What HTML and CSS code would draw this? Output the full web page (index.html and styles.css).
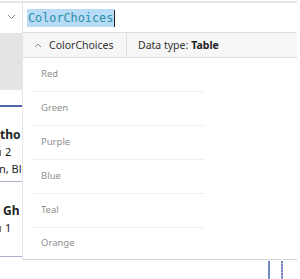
FILE: index.html
```html
<!DOCTYPE html>
<html>
<head>
<meta charset="utf-8">
<link rel="stylesheet" href="styles.css">
</head>
<body>
<div class="page">
  <div class="topline"></div>
  <div class="formula">
    <div class="chevcell">
      <svg width="9" height="6" viewBox="0 0 9 6"><path d="M1 1 L4.5 4.5 L8 1" fill="none" stroke="#8a8a8a" stroke-width="1"/></svg>
    </div>
    <div class="inputcell">
      <span class="sel">ColorChoices</span><span class="caret"></span>
    </div>
  </div>
  <div class="main">
    <div class="left">
      <div class="greybox"></div>
      <div class="rule rule-blue"></div>
      <div class="l l-bold l1">tho</div>
      <div class="l l2"><span class="frag"></span>2</div>
      <div class="l l3">n, Bl</div>
      <div class="rule rule-grey r2"></div>
      <div class="l l-bold l4">Gh</div>
      <div class="l l5"><span class="frag"></span>1</div>
      <div class="rule rule-grey r3"></div>
    </div>
    <div class="right">
      <div class="dropdown">
        <div class="head">
          <div class="head-name">
            <svg width="8" height="5" viewBox="0 0 8 5"><path d="M1 4 L4 1 L7 4" fill="none" stroke="#8a8a8a" stroke-width="1"/></svg>
            <span>ColorChoices</span>
          </div>
          <div class="head-type">Data type: <b>Table</b></div>
        </div>
        <ul class="items">
          <li>Red</li>
          <li>Green</li>
          <li>Purple</li>
          <li>Blue</li>
          <li>Teal</li>
          <li>Orange</li>
        </ul>
      </div>
      <div class="below">
        <div class="vline"></div>
        <div class="vline vline-dash"></div>
      </div>
    </div>
  </div>
</div>
</body>
</html>
```

FILE: styles.css
```css
* { box-sizing: border-box; }
html, body { margin: 0; padding: 0; background: #fff; }
.page {
  width: 300px;
  height: 279px;
  overflow: hidden;
  font-family: "Noto Sans", "Open Sans", sans-serif;
  color: #222;
}
.topline {
  margin-top: 1px;
  width: 297px;
  height: 2px;
  background: #e6e6e6;
}
.formula {
  display: flex;
  height: 29px;
}
.chevcell {
  width: 23px;
  border-right: 1px solid #e3e3e3;
  display: flex;
  align-items: center;
  justify-content: center;
  padding-bottom: 2px;
}
.inputcell {
  flex: 1;
  display: flex;
  align-items: center;
  padding-left: 4px;
  padding-top: 1px;
}
.sel {
  font-family: "DejaVu Sans Mono", monospace;
  font-size: 11.8px;
  line-height: 18px;
  color: #2b8fa6;
  background: #b8dcf6;
  padding: 0 1px;
}
.caret {
  display: inline-block;
  width: 1px;
  height: 17px;
  background: #222;
}
.main {
  display: flex;
  height: 247px;
}
.left {
  width: 22px;
  overflow: hidden;
  display: flex;
  flex-direction: column;
}
.greybox {
  height: 57px;
  background: #e4e4e4;
  margin-top: 1px;
}
.rule { height: 2px; flex: none; }
.rule-blue { background: #5064ad; margin-top: 15px; }
.rule-grey { background: #a9b0cc; height: 1px; }
.l {
  white-space: nowrap;
  font-size: 11px;
  line-height: 17px;
  color: #222;
  display: flex;
  align-items: center;
}
.l-bold { font-weight: 700; font-size: 12px; }
.l1 { margin-top: 19px; }
.l2 { margin-left: 0; }
.l3 { margin-left: -1px; }
.frag {
  display: inline-block;
  width: 1px;
  height: 6px;
  margin: 3px 4px 0 0;
  background: #777;
}
.r2 { margin-top: 4px; }
.l4 { margin-top: 20px; margin-left: 3px; }
.l5 { margin-left: 0; }
.r3 { margin-top: 20px; }
.right {
  flex: 1;
  display: flex;
  flex-direction: column;
}
.dropdown {
  width: 275px;
  height: 228px;
  border-left: 1px solid #e6e6e6;
  border-bottom: 1px solid #d6d6d6;
  background: #fff;
  display: flex;
  flex-direction: column;
}
.head {
  height: 27px;
  display: flex;
  background: #f6f6f6;
  border-top: 1px solid #dcdcdc;
  border-bottom: 1px solid #e0e0e0;
  font-size: 10.5px;
  color: #333;
}
.head-name {
  width: 104px;
  display: flex;
  align-items: center;
  gap: 7px;
  padding-left: 11px;
  border-right: 1px solid #e0e0e0;
}
.head-type {
  display: flex;
  align-items: center;
  gap: 3px;
  padding-left: 11px;
}
.head-type b { font-weight: 700; color: #222; }
.items {
  list-style: none;
  margin: 0;
  padding: 0 0 0 8px;
}
.items li {
  width: 174px;
  height: 34px;
  display: flex;
  align-items: center;
  padding-left: 10px;
  padding-bottom: 2px;
  font-size: 9.5px;
  color: #8f8f8f;
  border-bottom: 1px solid #f0f0f0;
}
.items li:last-child { border-bottom: none; height: 31px; }
.below {
  display: flex;
  height: 20px;
  padding-left: 246px;
  gap: 11px;
}
.vline {
  width: 2px;
  height: 19px;
  margin-top: 1px;
  background: #7586c4;
}
.vline-dash {
  background: repeating-linear-gradient(#7586c4 0 2px, #aab4dd 2px 3px);
}
```
